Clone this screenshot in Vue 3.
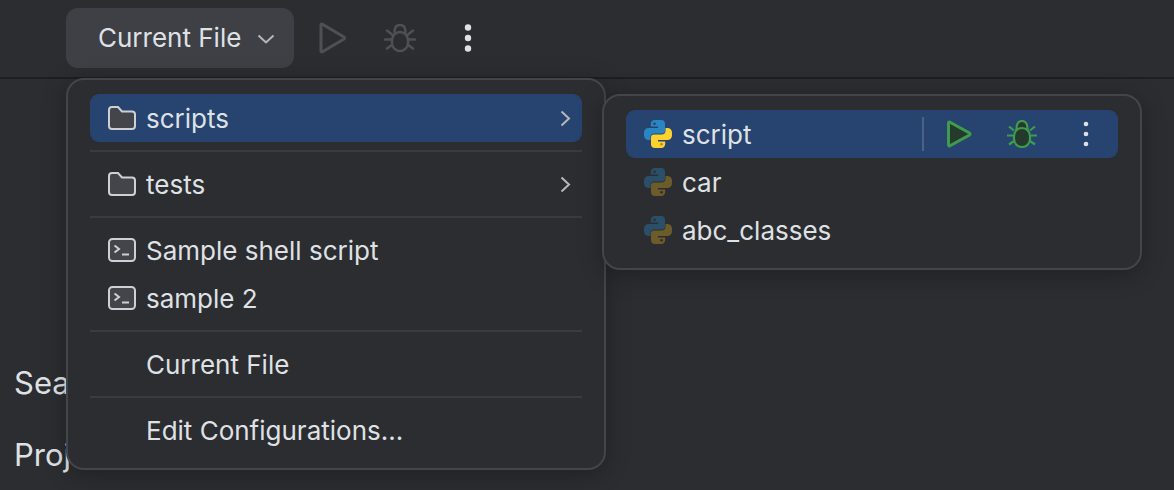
<script setup>
const legs = 'M8 10.5 3 6.5M7 15.5H1M8 21l-5 3.5M24 10.5l5-4M25 15.5h6M24 21l5 3.5'
const menu = [
  { label: 'scripts', icon: 'folder', sub: true, active: true },
  { label: 'tests', icon: 'folder', sub: true, sep: true },
  { label: 'Sample shell script', icon: 'term', sep: true },
  { label: 'sample 2', icon: 'term' },
  { label: 'Current File', sep: true },
  { label: 'Edit Configurations...', sep: true }
]
const files = [
  { label: 'script', active: true },
  { label: 'car' },
  { label: 'abc_classes' }
]
</script>

<template>
  <div class="page">
    <header class="toolbar">
      <button class="config">
        <span>Current File</span>
        <svg class="chev-down" width="18" height="10" viewBox="0 0 18 10"><path d="M1.5 1.5 9 8.5l7.5-7" /></svg>
      </button>
      <svg class="tool-run" width="30" height="32" viewBox="0 0 30 32"><path d="M4 3v26a1 1 0 0 0 1.500 .8L27 17a1.200 1.200 0 0 0 0-2L5.500 2.200A1 1 0 0 0 4 3z" /></svg>
      <svg class="tool-bug" width="32" height="30" viewBox="0 0 32 28">
        <rect x="8" y="8" width="16" height="19" rx="8" />
        <path d="M10.500 8c0-5 2-7 5.500-7s5.500 2 5.500 7" />
        <path :d="legs" />
      </svg>
      <svg class="tool-more" width="12" height="30" viewBox="0 0 12 30">
        <circle cx="6" cy="4.500" r="3.200" /><circle cx="6" cy="15" r="3.200" /><circle cx="6" cy="25.500" r="3.200" />
      </svg>
    </header>

    <main class="content">
      <p>Sea</p>
      <p>Proj</p>
    </main>

    <nav class="popup popup-main">
      <template v-for="item in menu" :key="item.label">
        <div v-if="item.sep" class="sep"></div>
        <div class="row" :class="{ active: item.active }">
          <span class="icon">
            <svg v-if="item.icon === 'folder'" width="28" height="24" viewBox="0 0 28 24">
              <path class="ico" d="M1 4a3 3 0 0 1 3-3h6l4 4.500h10a3 3 0 0 1 3 3V20a3 3 0 0 1-3 3H4a3 3 0 0 1-3-3z" />
            </svg>
            <svg v-else-if="item.icon === 'term'" width="28" height="24" viewBox="0 0 28 24">
              <rect class="ico" x="1" y="1" width="26" height="22" rx="3.500" />
              <path class="prompt" d="M6.500 7.500 11 11l-4.500 3.500M14 16.500h7" />
            </svg>
          </span>
          <span>{{ item.label }}</span>
          <svg v-if="item.sub" class="chev-right" width="11" height="17" viewBox="0 0 11 17"><path d="M1.500 1.500 9 8.500l-7.500 7" /></svg>
        </div>
      </template>
    </nav>

    <nav class="popup popup-sub">
      <div v-for="file in files" :key="file.label" class="row" :class="{ active: file.active }">
        <span class="icon">
          <svg class="py" :class="{ dim: !file.active }" width="28" height="28" viewBox="0 0 28 28">
            <g class="py-blue">
              <path d="M11 0h6a4 4 0 0 1 4 4v6.500a3 3 0 0 1-3 3h-7.500A4 4 0 0 0 6.500 17.500V20H4.500A4.500 4.500 0 0 1 0 15.500v-3A4.500 4.500 0 0 1 4.500 8H14V6.500H6.800V4A4 4 0 0 1 11 0z" />
              <circle class="py-eye" cx="10.500" cy="3.800" r="1.300" />
            </g>
            <g class="py-yellow" transform="rotate(180 14 14)">
              <path d="M11 0h6a4 4 0 0 1 4 4v6.500a3 3 0 0 1-3 3h-7.500A4 4 0 0 0 6.500 17.500V20H4.500A4.500 4.500 0 0 1 0 15.500v-3A4.500 4.500 0 0 1 4.500 8H14V6.500H6.800V4A4 4 0 0 1 11 0z" />
              <circle class="py-eye" cx="10.500" cy="3.800" r="1.300" />
            </g>
          </svg>
        </span>
        <span>{{ file.label }}</span>
        <div v-if="file.active" class="actions">
          <i class="divider"></i>
          <svg class="act-run" width="28" height="28" viewBox="0 0 28 28"><path d="M3.500 3v22a1 1 0 0 0 1.500 .8L24.500 15a1.200 1.200 0 0 0 0-2L5 2.200A1 1 0 0 0 3.500 3z" /></svg>
          <svg class="act-bug" width="32" height="28" viewBox="0 0 32 28">
            <path class="head" d="M10.500 9c0-5.500 2-8 5.500-8s5.500 2.500 5.500 8z" />
            <rect x="8" y="8" width="16" height="19" rx="8" />
            <path class="limbs" :d="legs" />
          </svg>
          <svg class="act-more" width="12" height="28" viewBox="0 0 12 28">
            <circle cx="6" cy="4" r="2.300" /><circle cx="6" cy="14" r="2.300" /><circle cx="6" cy="24" r="2.300" />
          </svg>
        </div>
      </div>
    </nav>
  </div>
</template>

<style>
html, body { margin: 0; background: #2b2d30; }
</style>

<style scoped>
.page {
  position: relative;
  width: 1174px;
  height: 490px;
  overflow: hidden;
  background: #2b2d30;
  color: #dfe1e5;
  font-family: Inter, "Noto Sans", sans-serif;
  font-size: 26px;
}
.toolbar {
  display: flex;
  align-items: center;
  box-sizing: border-box;
  height: 79px;
  padding: 0 0 2px 66px;
  border-bottom: 2px solid #1e1f22;
}
.config {
  display: flex;
  align-items: center;
  box-sizing: border-box;
  width: 228px;
  height: 60px;
  padding: 0 0 0 32px;
  border: 0;
  border-radius: 12px;
  background: #3e4045;
  color: inherit;
  font: inherit;
}
.chev-down { margin-left: 16px; margin-top: 3px; }
.chev-down path { fill: none; stroke: #b4b8bf; stroke-width: 2; }
.tool-run { margin-left: 23px; }
.tool-run path { fill: none; stroke: #4e5055; stroke-width: 3; stroke-linejoin: round; }
.tool-bug { margin-left: 37px; }
.tool-bug rect, .tool-bug path { fill: none; stroke: #4e5055; stroke-width: 2.500; stroke-linecap: round; }
.tool-more { margin-left: 46px; }
.tool-more circle { fill: #dfe1e5; }
.content { padding-top: 268px; font-size: 31px; }
.content p { margin: 0; padding-left: 14px; line-height: 72px; }
.popup {
  position: absolute;
  box-sizing: border-box;
  width: 540px;
  border: 2px solid #43454a;
  border-radius: 18px;
  background: #2b2d30;
  padding: 14px 22px;
  box-shadow: 0 4px 24px rgba(0, 0, 0, .28);
}
.popup-main { left: 66px; top: 78px; height: 392px; }
.popup-sub { left: 602px; top: 94px; height: 176px; }
.row {
  display: flex;
  align-items: center;
  height: 48px;
  padding-left: 18px;
  border-radius: 9px;
}
.row.active { background: #26446f; }
.icon { display: flex; align-items: center; width: 28px; margin-right: 10px; flex: none; }
.ico { fill: #43454a; stroke: #ced0d6; stroke-width: 2; }
.prompt { fill: none; stroke: #ced0d6; stroke-width: 2; }
.sep { height: 2px; margin: 8px 0; background: #393b40; }
.chev-right { margin-left: auto; margin-right: 11px; }
.chev-right path { fill: none; stroke: #b4b8bf; stroke-width: 2; }
.py-blue path { fill: #2a86c2; }
.py-yellow path { fill: #fdd22f; }
.py-blue .py-eye { fill: #26446f; }
.py-yellow .py-eye { fill: #b58a10; }
.py.dim .py-blue path { fill: #2c4f69; }
.py.dim .py-yellow path { fill: #6c5c2a; }
.py.dim .py-eye { fill: #2b2d30; }
.actions { display: flex; align-items: center; margin-left: auto; }
.divider { width: 2px; height: 34px; background: #4b6186; }
.act-run { margin-left: 21px; }
.act-run path { fill: #253a2c; stroke: #3f9c4d; stroke-width: 3; stroke-linejoin: round; }
.act-bug { margin-left: 33px; }
.act-bug rect { fill: #253a2c; stroke: #3f9c4d; stroke-width: 2.200; }
.act-bug .head { fill: #253a2c; stroke: #3f9c4d; stroke-width: 2.200; }
.act-bug .limbs { fill: none; stroke: #3f9c4d; stroke-width: 2.200; }
.act-more { margin-left: 42px; margin-right: 26px; }
.act-more circle { fill: #dfe1e5; }
</style>
